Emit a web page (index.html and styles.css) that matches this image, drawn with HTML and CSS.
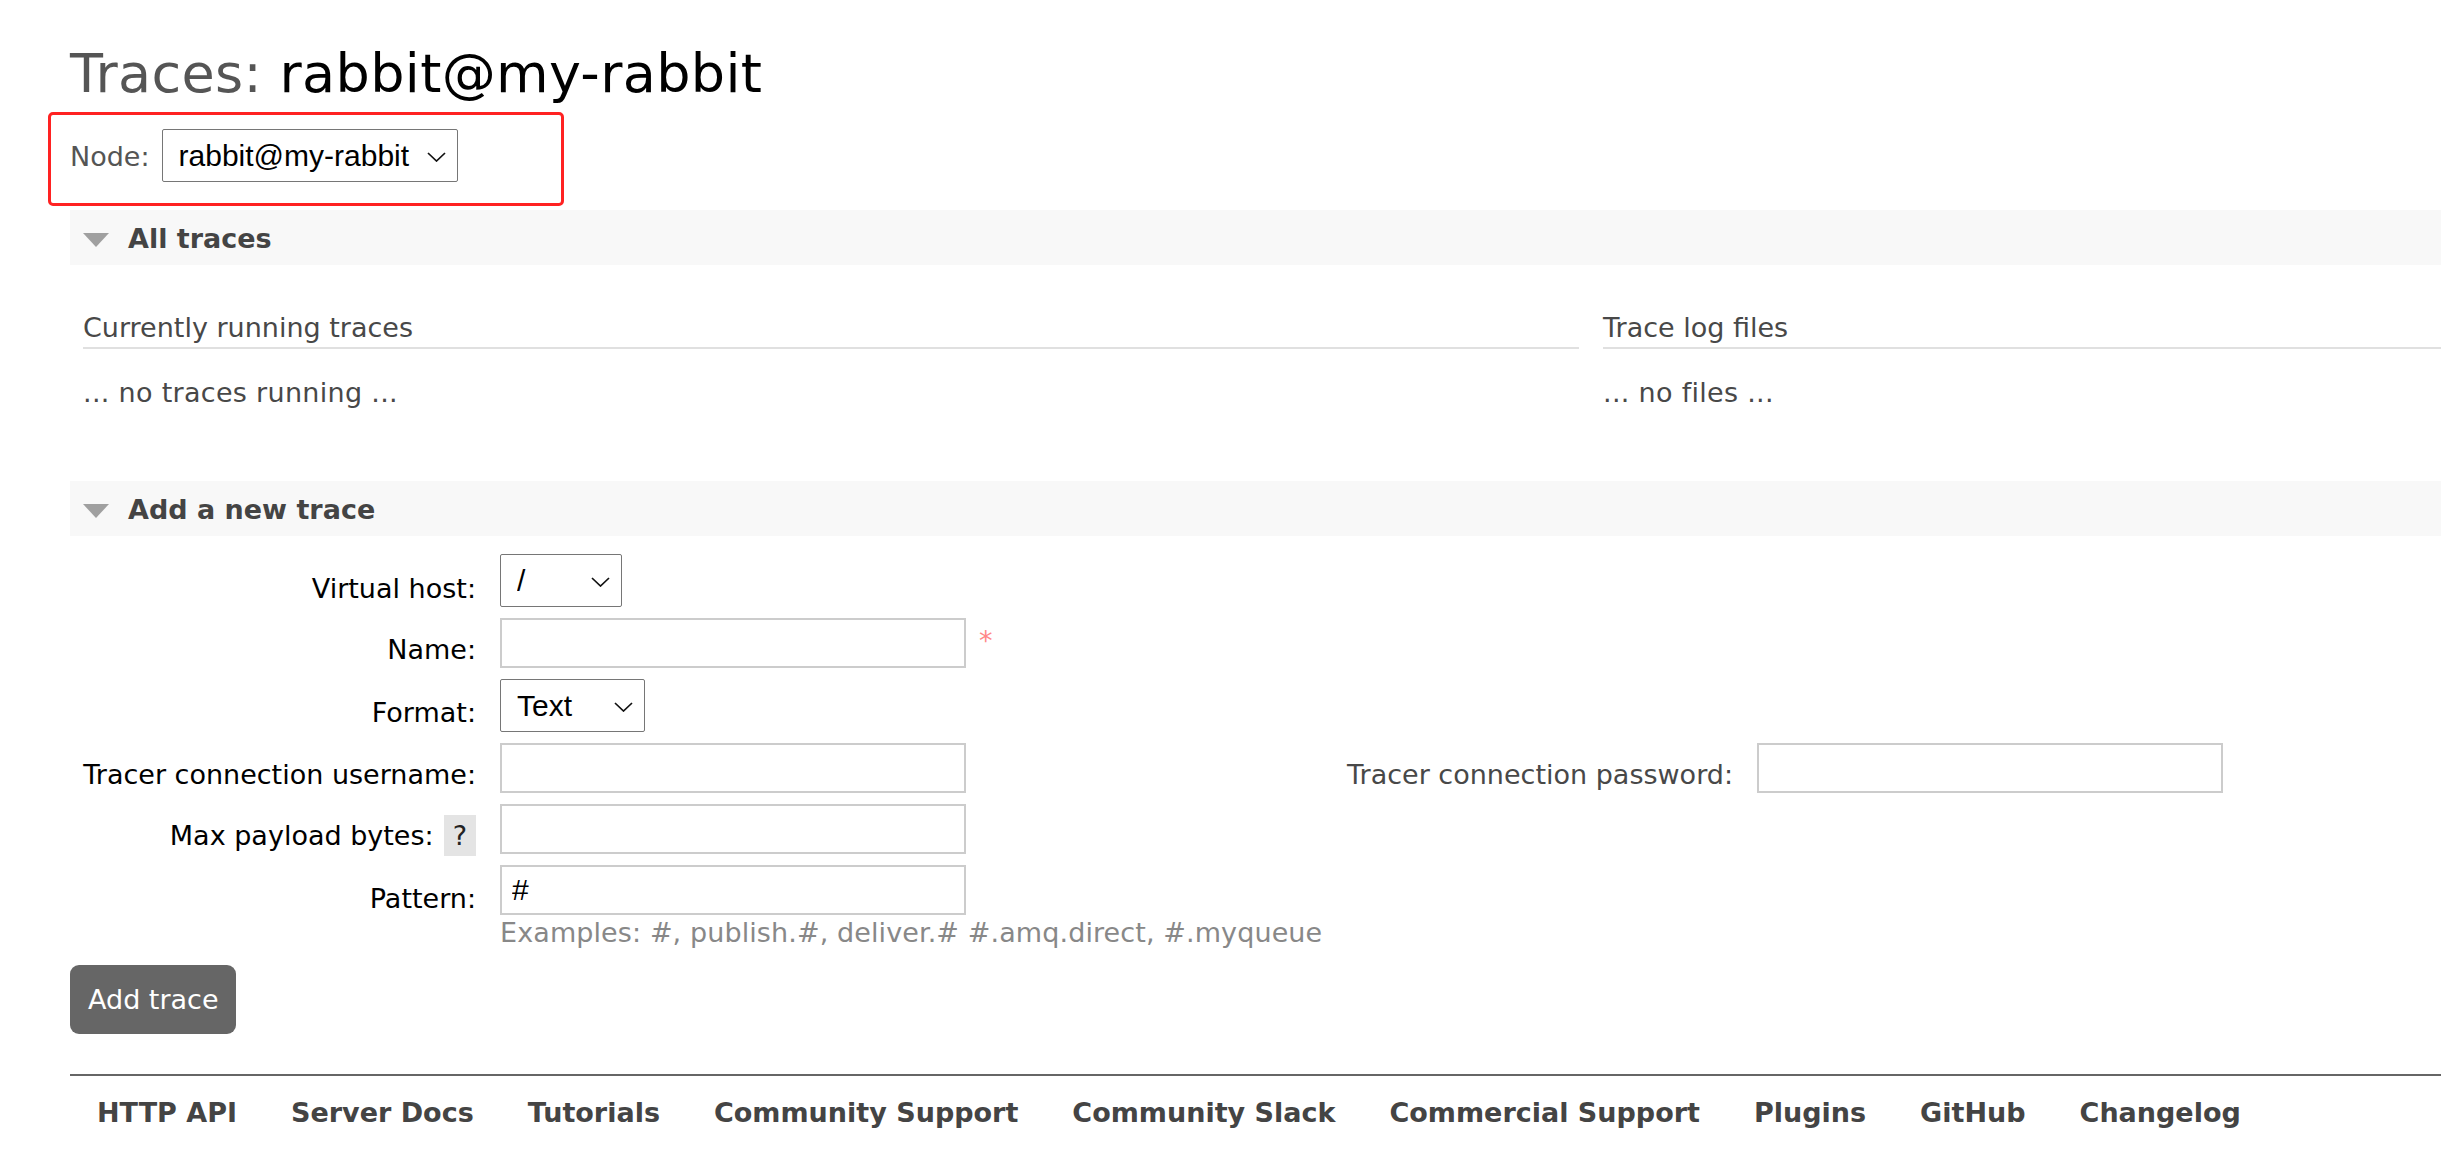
FILE: index.html
```html
<!DOCTYPE html>
<html lang="en">
<head>
<meta charset="utf-8">
<title>Traces: rabbit@my-rabbit</title>
<link rel="stylesheet" href="styles.css">
</head>
<body>
<div class="page">
  <div class="main">
    <h1 class="title"><span class="title-key">Traces:</span> <span class="title-val">rabbit@my-rabbit</span></h1>

    <div class="node-row">
      <span class="node-label">Node:</span>
      <span class="sel">
        <select class="select select-node"><option>rabbit@my-rabbit</option></select>
        <svg class="chev" width="19" height="10" viewBox="0 0 19 10"><polyline points="1,1 9.5,9 18,1" /></svg>
      </span>
    </div>

    <div class="section">
      <h2 class="band"><svg class="tri" width="26" height="14" viewBox="0 0 26 14"><polygon points="0,0 26,0 13,14" /></svg>All traces</h2>
      <div class="section-body">
        <div class="cols">
          <div class="col">
            <h3 class="col-head">Currently running traces</h3>
            <p class="empty">... no traces running ...</p>
          </div>
          <div class="col">
            <h3 class="col-head">Trace log files</h3>
            <p class="empty">... no files ...</p>
          </div>
        </div>
      </div>
    </div>

    <div class="section section-add">
      <h2 class="band"><svg class="tri" width="26" height="14" viewBox="0 0 26 14"><polygon points="0,0 26,0 13,14" /></svg>Add a new trace</h2>
      <div class="section-body">
        <form class="form">
          <label class="lbl lbl-sel">Virtual host:</label>
          <div class="cell">
            <span class="sel">
              <select class="select select-vhost"><option>/</option></select>
              <svg class="chev" width="19" height="10" viewBox="0 0 19 10"><polyline points="1,1 9.5,9 18,1" /></svg>
            </span>
          </div>
          <div class="spacer"></div>
          <div class="spacer"></div>

          <label class="lbl">Name:</label>
          <div class="cell cell-row">
            <input class="input" type="text">
            <span class="mand">*</span>
          </div>
          <div class="spacer"></div>
          <div class="spacer"></div>

          <label class="lbl lbl-fmt">Format:</label>
          <div class="cell">
            <span class="sel">
              <select class="select select-format"><option>Text</option><option>JSON</option></select>
              <svg class="chev" width="19" height="10" viewBox="0 0 19 10"><polyline points="1,1 9.5,9 18,1" /></svg>
            </span>
          </div>
          <div class="spacer"></div>
          <div class="spacer"></div>

          <label class="lbl">Tracer connection username:</label>
          <div class="cell"><input class="input" type="text"></div>
          <label class="lbl lbl-soft">Tracer connection password:</label>
          <div class="cell"><input class="input" type="password"></div>

          <label class="lbl">Max payload bytes:<span class="help">?</span></label>
          <div class="cell"><input class="input" type="text"></div>
          <div class="spacer"></div>
          <div class="spacer"></div>

          <label class="lbl lbl-pat">Pattern:</label>
          <div class="cell">
            <input class="input" type="text" value="#">
            <div class="examples">Examples: #, publish.#, deliver.# #.amq.direct, #.myqueue</div>
          </div>
          <div class="spacer"></div>
          <div class="spacer"></div>
        </form>
      </div>
    </div>

    <button class="btn" type="button">Add trace</button>

    <div class="footer">
      <a class="flink">HTTP API</a>
      <a class="flink">Server Docs</a>
      <a class="flink">Tutorials</a>
      <a class="flink">Community Support</a>
      <a class="flink">Community Slack</a>
      <a class="flink">Commercial Support</a>
      <a class="flink">Plugins</a>
      <a class="flink">GitHub</a>
      <a class="flink">Changelog</a>
    </div>
  </div>

  <div class="highlight"></div>
</div>
</body>
</html>
```

FILE: styles.css
```css
html {
  overflow: hidden;
}

body {
  margin: 0;
  background: #fff;
  color: #484848;
  font-family: "DejaVu Sans", Verdana, sans-serif;
  font-size: 27px;
  line-height: 31px;
}

.page {
  position: relative;
}

.main {
  padding: 42px 0 40px 70px;
}

.title {
  margin: 0;
  font-size: 54px;
  line-height: 63px;
  font-weight: normal;
  letter-spacing: 0.35px;
  white-space: nowrap;
}

.title-key {
  color: #555;
}

.title-val {
  color: #000;
}

.node-row {
  margin-top: 24px;
  display: flex;
  align-items: baseline;
}

.node-label {
  color: #555;
  margin-right: 12px;
}

.sel {
  position: relative;
  display: inline-block;
}

.select {
  -webkit-appearance: none;
  appearance: none;
  box-sizing: border-box;
  height: 53px;
  border: 1px solid #767676;
  border-radius: 2px;
  background: #fff;
  color: #000;
  font-family: "Liberation Sans", Arial, sans-serif;
  font-size: 30px;
  padding: 0 0 0 16px;
  margin: 0;
  display: block;
}

.select-node {
  width: 296px;
}

.select-vhost {
  width: 122px;
}

.select-format {
  width: 145px;
}

.chev {
  position: absolute;
  right: 12px;
  top: 50%;
  margin-top: -4px;
  pointer-events: none;
}

.chev polyline {
  fill: none;
  stroke: #111;
  stroke-width: 1.7;
}

.section {
  margin-top: 28px;
}

.section-add {
  margin-top: 73px;
}

.band {
  margin: 0;
  background: #f8f8f8;
  color: #444;
  font-size: 27px;
  line-height: 31px;
  font-weight: bold;
  padding: 13px 0 11px 0;
  display: flex;
  align-items: flex-start;
  white-space: nowrap;
}

.tri {
  flex: none;
  margin: 10px 19px 0 13px;
}

.tri polygon {
  fill: #a0a0a0;
}

.section-body {
  padding: 0 13px;
}

.cols {
  display: grid;
  grid-template-columns: 1496px 1496px;
  column-gap: 24px;
  margin-top: 47px;
}

.col-head {
  margin: 0;
  font-size: 27px;
  line-height: 31px;
  font-weight: normal;
  color: #484848;
  padding-bottom: 4px;
  border-bottom: 2px solid #e0e0e0;
}

.empty {
  margin: 28px 0 0 0;
  color: #484848;
  letter-spacing: 0.3px;
}

.form {
  margin-top: 18px;
  display: grid;
  grid-template-columns: 393px 821px 388px 466px;
  column-gap: 24px;
  row-gap: 11px;
  align-items: start;
}

.lbl {
  text-align: right;
  color: #000;
  padding-top: 16px;
  white-space: nowrap;
}

.lbl-sel {
  padding-top: 19px;
}

.lbl-fmt,
.lbl-pat {
  padding-top: 18px;
}

.lbl-soft {
  color: #484848;
}

.help {
  margin-left: 10px;
  padding: 5px 9px;
  background: #e4e4e4;
  color: #222;
}

.cell-row {
  display: flex;
  align-items: flex-start;
}

.input {
  box-sizing: border-box;
  width: 466px;
  height: 50px;
  border: 2px solid #cccccc;
  padding: 0 10px;
  margin: 0;
  font-family: "Liberation Sans", Arial, sans-serif;
  font-size: 30px;
  color: #000;
  background: #fff;
  display: block;
}

.mand {
  color: #f88;
  margin: 7px 0 0 13px;
}

.examples {
  margin-top: 2px;
  color: #888;
  letter-spacing: 0.1px;
  white-space: nowrap;
}

.btn {
  display: block;
  margin-top: 17px;
  background: #666;
  color: #fff;
  border: none;
  border-radius: 9px;
  font-family: "DejaVu Sans", Verdana, sans-serif;
  font-size: 27px;
  line-height: 31px;
  padding: 19px 17px 19px 18px;
}

.footer {
  margin-top: 40px;
  border-top: 2px solid #666;
  padding-top: 21px;
  display: flex;
  white-space: nowrap;
}

.flink {
  color: #444;
  font-weight: bold;
  padding: 0 27px;
}

.highlight {
  position: absolute;
  left: 48px;
  top: 112px;
  width: 516px;
  height: 94px;
  box-sizing: border-box;
  border: 3px solid #ff2222;
  border-radius: 5px;
  pointer-events: none;
}
```
